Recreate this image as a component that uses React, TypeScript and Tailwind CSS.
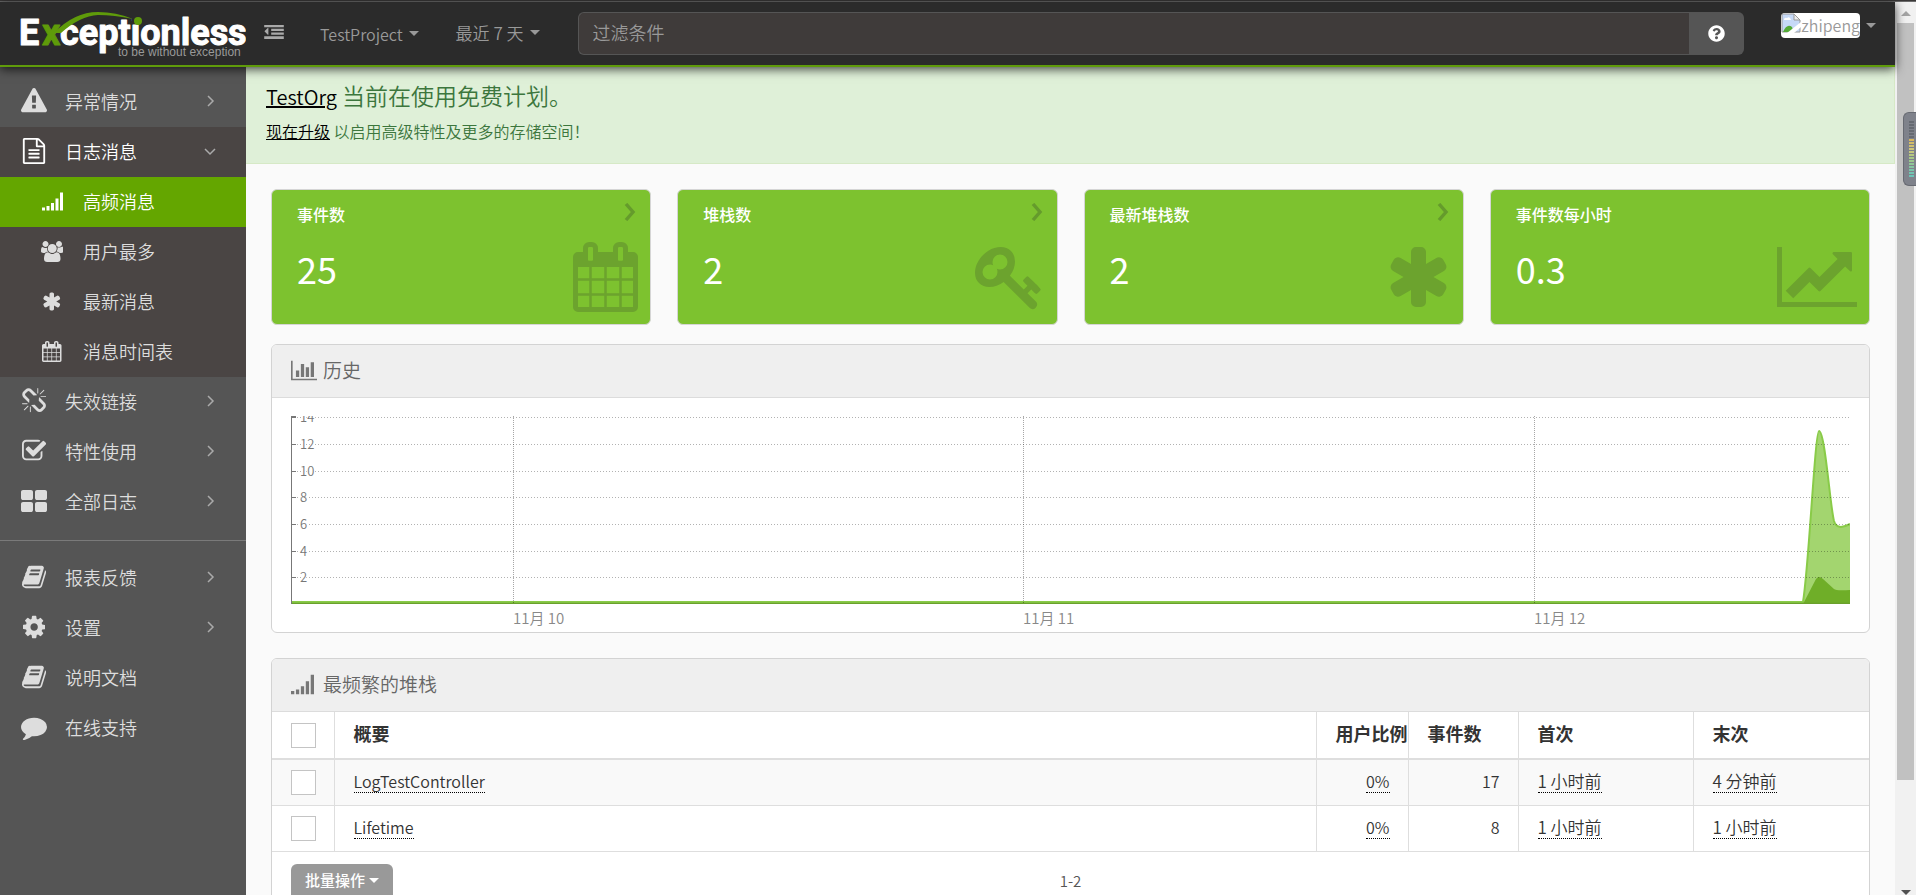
import { useState } from 'react'
import type { ReactNode } from 'react'
import { FaQuestionCircle } from 'react-icons/fa'
import clsx from 'clsx'

type Glyph = { box: string; d: string }

const GLYPHS = {
  warning: {
    box: '0 0 1792 1792',
    d: 'M1024 1375v-190q0-14-9.5-23.5t-22.5-9.5h-192q-13 0-22.5 9.5t-9.5 23.5v190q0 14 9.5 23.5t22.5 9.5h192q13 0 22.5-9.5t9.5-23.5zm-2-374l18-459q0-12-10-19-13-11-24-11h-220q-11 0-24 11-10 7-10 21l17 457q0 10 10 16.5t24 6.5h185q14 0 23.5-6.5t10.5-16.5zm-14-934l768 1408q35 63-2 126-17 29-46.5 46t-63.5 17h-1536q-34 0-63.5-17t-46.5-46q-37-63-2-126l768-1408q17-31 47-49t65-18 65 18 47 49z',
  },
  file: {
    box: '0 0 1792 1792',
    d: 'M1596 380q28 28 48 76t20 88v1152q0 40-28 68t-68 28h-1344q-40 0-68-28t-28-68v-1600q0-40 28-68t68-28h896q40 0 88 20t76 48zm-444-244v376h376q-10-29-22-41l-313-313q-12-12-41-22zm384 1528v-1024h-416q-40 0-68-28t-28-68v-416h-768v1536h1280zm-1024-864q0-14 9-23t23-9h704q14 0 23 9t9 23v64q0 14-9 23t-23 9h-704q-14 0-23-9t-9-23v-64zm736 224q14 0 23 9t9 23v64q0 14-9 23t-23 9h-704q-14 0-23-9t-9-23v-64q0-14 9-23t23-9h704zm0 256q14 0 23 9t9 23v64q0 14-9 23t-23 9h-704q-14 0-23-9t-9-23v-64q0-14 9-23t23-9h704z',
  },
  signal: {
    box: '0 0 1792 1792',
    d: 'M0 1408h256v256h-256zM384 1280h256v384h-256zM768 1024h256v640h-256zM1152 640h256v1024h-256zM1536 128h256v1536h-256z',
  },
  users: {
    box: '64 0 1920 1792',
    d: 'M657 896q-162 5-265 128h-134q-82 0-138-40.5t-56-118.5q0-353 124-353 6 0 43.5 21t97.5 42.5 119 21.5q67 0 133-23-5 37-5 66 0 159 93 293zm1071 637q0 120-73 189.5t-194 69.5h-874q-121 0-194-69.5t-73-189.5q0-53 3.5-103.5t14-109 26.5-108.5 43-97.5 62-81 85.5-53.5 111.5-20q10 0 43 21.5t73 48 107 48 135 21.5 135-21.5 107-48 73-48 43-21.5q61 0 111.5 20t85.5 53.5 62 81 43 97.5 26.5 108.5 14 109 3.5 103.5zm-1024-1277q0 106-75 181t-181 75-181-75-75-181 75-181 181-75 181 75 75 181zm704 384q0 159-112.5 271.5t-271.5 112.5-271.5-112.5-112.5-271.5 112.5-271.5 271.5-112.5 271.5 112.5 112.5 271.5zm576 225q0 78-56 118.5t-138 40.5h-134q-103-123-265-128 93-134 93-293 0-29-5-66 66 23 133 23 59 0 119-21.5t97.5-42.5 43.5-21q124 0 124 353zm-128-609q0 106-75 181t-181 75-181-75-75-181 75-181 181-75 181 75 75 181z',
  },
  asterisk: {
    box: '64 0 1664 1792',
    d: 'M1546 1050q46 26 59.5 77.5t-12.5 97.5l-64 110q-26 46-77.5 59.5t-97.5-12.5l-266-153v307q0 52-38 90t-90 38h-128q-52 0-90-38t-38-90v-307l-266 153q-46 26-97.5 12.5t-77.5-59.5l-64-110q-26-46-12.5-97.5t59.5-77.5l266-154-266-154q-46-26-59.5-77.5t12.5-97.5l64-110q26-46 77.5-59.5t97.5 12.5l266 153v-307q0-52 38-90t90-38h128q52 0 90 38t38 90v307l266-153q46-26 97.5-12.5t77.5 59.5l64 110q26 46 12.5 97.5t-59.5 77.5l-266 154z',
  },
  calendar: {
    box: '64 0 1664 1792',
    d: 'M192 1664h288v-288h-288v288zm352 0h320v-288h-320v288zm-352-352h288v-320h-288v320zm352 0h320v-320h-320v320zm-352-384h288v-288h-288v288zm736 736h320v-288h-320v288zm-384-736h320v-288h-320v288zm768 736h288v-288h-288v288zm-384-352h320v-320h-320v320zm-352-864v-288q0-13-9.5-22.5t-22.5-9.5h-64q-13 0-22.5 9.5t-9.5 22.5v288q0 13 9.5 22.5t22.5 9.5h64q13 0 22.5-9.5t9.5-22.5zm736 864h288v-320h-288v320zm-384-384h320v-288h-320v288zm384 0h288v-288h-288v288zm32-480v-288q0-13-9.5-22.5t-22.5-9.5h-64q-13 0-22.5 9.5t-9.5 22.5v288q0 13 9.5 22.5t22.5 9.5h64q13 0 22.5-9.5t9.5-22.5zm384-64v1280q0 52-38 90t-90 38h-1408q-52 0-90-38t-38-90v-1280q0-52 38-90t90-38h128v-96q0-66 47-113t113-47h64q66 0 113 47t47 113v96h384v-96q0-66 47-113t113-47h64q66 0 113 47t47 113v96h128q52 0 90 38t38 90z',
  },
  unlink: {
    box: '0 0 1664 1792',
    d: 'M439 1271l-256 256q-11 9-23 9t-23-9q-9-10-9-23t9-23l256-256q10-9 23-9t23 9q9 10 9 23t-9 23zm169 41v320q0 14-9 23t-23 9-23-9-9-23v-320q0-14 9-23t23-9 23 9 9 23zm-224-224q0 14-9 23t-23 9h-320q-14 0-23-9t-9-23 9-23 23-9h320q14 0 23 9t9 23zm1264 128q0 120-85 203l-147 146q-83 83-203 83-121 0-204-85l-334-335q-21-21-42-56l239-18 273 274q28 28 68 28.5t68-27.5l147-146q28-28 28-67 0-40-28-68l-274-275 18-239q35 21 56 42l336 336q84 86 84 204zm-617-724l-239 18-273-274q-28-28-68-28-39 0-68 27l-147 146q-28 28-28 67 0 40 28 68l274 274-18 240q-35-21-56-42l-336-336q-84-86-84-204 0-120 85-203l147-146q83-83 203-83 121 0 204 85l334 335q21 21 42 56zm633 84q0 14-9 23t-23 9h-320q-14 0-23-9t-9-23 9-23 23-9h320q14 0 23 9t9 23zm-544-544v320q0 14-9 23t-23 9-23-9-9-23v-320q0-14 9-23t23-9 23 9 9 23zm407 151l-256 256q-11 9-23 9t-23-9q-9-10-9-23t9-23l256-256q10-9 23-9t23 9q9 10 9 23t-9 23z',
  },
  check: {
    box: '64 0 1664 1792',
    d: 'M1472 930v318q0 119-84.5 203.5t-203.5 84.5h-832q-119 0-203.5-84.5t-84.5-203.5v-832q0-119 84.5-203.5t203.5-84.5h832q63 0 117 25 15 7 18 23 3 17-9 29l-49 49q-10 10-23 10-3 0-9-2-23-6-45-6h-832q-66 0-113 47t-47 113v832q0 66 47 113t113 47h832q66 0 113-47t47-113v-254q0-13 9-22l64-64q10-10 23-10 6 0 12 3 20 8 20 29zm231-489l-814 814q-24 24-57 24t-57-24l-430-430q-24-24-24-57t24-57l110-110q24-24 57-24t57 24l263 263 647-647q24-24 57-24t57 24l110 110q24 24 24 57t-24 57z',
  },
  blocks: {
    box: '64 0 1664 1664',
    d: 'M832 1024v384q0 52-38 90t-90 38h-512q-52 0-90-38t-38-90v-384q0-52 38-90t90-38h512q52 0 90 38t38 90zm0-768v384q0 52-38 90t-90 38h-512q-52 0-90-38t-38-90v-384q0-52 38-90t90-38h512q52 0 90 38t38 90zm896 768v384q0 52-38 90t-90 38h-512q-52 0-90-38t-38-90v-384q0-52 38-90t90-38h512q52 0 90 38t38 90zm0-768v384q0 52-38 90t-90 38h-512q-52 0-90-38t-38-90v-384q0-52 38-90t90-38h512q52 0 90 38t38 90z',
  },
  book: {
    box: '64 0 1664 1792',
    d: 'M1703 478q40 57 18 129l-275 906q-19 64-76.5 107.5t-122.5 43.5h-923q-77 0-148.5-53.5t-99.5-131.5q-24-67-2-127 0-4 3-27t4-37q1-8-3-21.5t-3-19.5q2-11 8-21t16.5-23.5 16.5-23.5q23-38 45-91.5t30-91.5q3-10 .5-30t-.5-28q3-11 17-28t17-23q21-36 42-92t25-90q1-9-2.5-32t.5-28q4-13 22-30.5t22-22.5q19-26 42.5-84.5t27.5-96.5q1-8-3-25.5t-2-26.5q2-8 9-18t18-23 17-21q8-12 16.5-30.5t15-35 16-36 19.5-32 26.5-23.5 36-11.5 47.5 5.5l-1 3q38-9 51-9h761q74 0 114 56t18 130l-274 906q-36 119-71.5 153.5t-128.5 34.5h-869q-27 0-38 15-11 16-1 43 24 70 144 70h923q29 0 56-15.5t35-41.5l300-987q7-22 5-57 38 15 59 43zm-1064 2q-4 13 2 22.5t20 9.5h608q13 0 25.5-9.5t16.5-22.5l21-64q4-13-2-22.5t-20-9.5h-608q-13 0-25.5 9.5t-16.5 22.5zm-83 256q-4 13 2 22.5t20 9.5h608q13 0 25.5-9.5t16.5-22.5l21-64q4-13-2-22.5t-20-9.5h-608q-13 0-25.5 9.5t-16.5 22.5z',
  },
  cog: {
    box: '128 0 1536 1792',
    d: 'M1152 896q0-106-75-181t-181-75-181 75-75 181 75 181 181 75 181-75 75-181zm512-109v222q0 12-8 23t-20 13l-185 28q-19 54-39 91 35 50 107 138 10 12 10 25t-9 23q-27 37-99 108t-94 71q-12 0-26-9l-138-108q-44 23-91 38-16 136-29 186-7 28-36 28h-222q-14 0-24.5-8.5t-11.5-21.5l-28-184q-49-16-90-37l-141 107q-10 9-25 9-14 0-25-11-126-114-165-168-7-10-7-23 0-12 8-23 15-21 51-66.5t54-70.5q-27-50-41-99l-183-27q-13-2-21-12.5t-8-23.5v-222q0-12 8-23t19-13l186-28q14-46 39-92-40-57-107-138-10-12-10-24 0-10 9-23 26-36 98.5-107.5t94.5-71.5q13 0 26 10l138 107q44-23 91-38 16-136 29-186 7-28 36-28h222q14 0 24.5 8.5t11.5 21.5l28 184q49 16 90 37l142-107q9-9 24-9 13 0 25 10 129 119 165 170 7 8 7 22 0 12-8 23-15 21-51 66.5t-54 70.5q26 50 41 98l183 28q13 2 21 12.5t8 23.5z',
  },
  comment: {
    box: '0 0 1792 1792',
    d: 'M1792 896q0 174-120 321.5t-326 233-450 85.5q-70 0-145-8-198 175-460 242-49 14-114 22-17 2-30.5-9t-17.5-29v-1q-3-4-.5-12t2-10 4.5-9.5l6-9 7-8.5 8-9q7-8 31-34.5t34.5-38 31-39.5 32.5-51 27-59 26-76q-157-89-247.5-220t-90.5-281q0-130 71-248.5t191-204.5 286-136.5 348-50.5q244 0 450 85.5t326 233 120 321.5z',
  },
  key: {
    box: '0 0 1792 1792',
    d: 'M832 512q0-80-56-136t-136-56-136 56-56 136q0 42 19 83-41-19-83-19-80 0-136 56t-56 136 56 136 136 56 136-56 56-136q0-42-19-83 41 19 83 19 80 0 136-56t56-136zm851 704q0 17-49 66t-66 49q-9 0-28.5-16t-36.5-33-38.5-40-24.5-26l-96 96 220 220q28 28 28 68 0 42-39 81t-81 39q-40 0-68-28l-671-671q-176 131-365 131-163 0-265.5-102.5t-102.5-265.5q0-160 95-313t248-248 313-95q163 0 265.5 102.5t102.5 265.5q0 189-131 365l355 355 96-96q-3-3-26-24.5t-40-38.5-33-36.5-16-28.5q0-17 49-66t66-49q13 0 23 10 6 6 46 44.5t82 79.5 86.5 86 73 78 28.5 41z',
  },
  lineChart: {
    box: '0 0 2048 1792',
    d: 'M2048 1536v128h-2048v-1536h128v1408h1920zm-128-1248v435q0 21-19.5 29.5t-35.5-7.5l-121-121-633 633q-10 10-23 10t-23-10l-233-233-416 416-192-192 585-585q10-10 23-10t23 10l233 233 464-464-121-121q-16-16-7.5-35.5t29.5-19.5h435q14 0 23 9t9 23z',
  },
  barChart: {
    box: '0 0 2048 1792',
    d: 'M640 896v512h-256v-512h256zm384-512v1024h-256v-1024h256zm1024 1152v128h-2048v-1536h128v1408h1920zm-640-896v768h-256v-768h256zm384-384v1152h-256v-1152h256z',
  },
  outdent: {
    box: '0 256 1792 1280',
    d: 'M384 544v576q0 32-32 32-14 0-23-9l-288-288q-18-23 0-46l288-288q9-9 23-9 32 0 32 32zM0 1280h1792v256h-1792zM640 938h1152v214h-1152zM640 597h1152v214h-1152zM0 256h1792v214h-1792z',
  },
} satisfies Record<string, Glyph>

type GlyphName = keyof typeof GLYPHS

function Icon({ name, className }: { name: GlyphName; className?: string }) {
  const g = GLYPHS[name]
  return (
    <svg viewBox={g.box} className={className} fill="currentColor" aria-hidden="true">
      <path d={g.d} />
    </svg>
  )
}

function Caret({ className }: { className?: string }) {
  return (
    <svg viewBox="0 0 10 5" className={clsx('w-2.5 h-[5px] shrink-0', className)} fill="currentColor" aria-hidden="true">
      <path d="M0 0h10l-5 5z" />
    </svg>
  )
}

function Logo() {
  return (
    <svg viewBox="0 0 246 63" className="w-[246px] h-[63px] shrink-0" role="img" aria-label="Exceptionless">
      <g fontFamily="Roboto, sans-serif" fontWeight="700" fontSize="36" strokeWidth="1" strokeLinejoin="round">
        <text x="19" y="43" fill="#fff" stroke="#fff">E</text>
        <text x="42" y="43" fill="#5f9b0a" stroke="#5f9b0a">x</text>
        <text x="60" y="43" fill="#fff" stroke="#fff">ceptionless</text>
      </g>
      <path d="M54 31Q74 10 98 10Q116 10 133 17Q114 13 98 13Q80 14 61 31z" fill="#5f9b0a" />
      <rect x="132" y="13" width="12" height="9" fill="#2b2b2b" />
      <circle cx="138" cy="19" r="4" fill="#5f9b0a" />
      <text x="118" y="54" fontFamily="'Liberation Sans', sans-serif" fontSize="12" fill="#999">to be without exception</text>
    </svg>
  )
}

type NavItem = { icon: GlyphName; label: string; expandable?: boolean }

const SUB_NAV: NavItem[] = [
  { icon: 'signal', label: '高频消息' },
  { icon: 'users', label: '用户最多' },
  { icon: 'asterisk', label: '最新消息' },
  { icon: 'calendar', label: '消息时间表' },
]

const LOG_NAV: NavItem[] = [
  { icon: 'unlink', label: '失效链接', expandable: true },
  { icon: 'check', label: '特性使用', expandable: true },
  { icon: 'blocks', label: '全部日志', expandable: true },
]

const TOOL_NAV: NavItem[] = [
  { icon: 'book', label: '报表反馈', expandable: true },
  { icon: 'cog', label: '设置', expandable: true },
  { icon: 'book', label: '说明文档' },
  { icon: 'comment', label: '在线支持' },
]

function NavRow({ item, open }: { item: NavItem; open?: boolean }) {
  return (
    <a
      href="#"
      className={clsx('flex items-center h-[50px] pl-5 pr-[30px] pb-0.5', open ? 'bg-[#4a4544] text-white' : 'text-[#ddd]')}
    >
      <span className="flex justify-center w-7 mr-[17px]">
        <Icon name={item.icon} className="h-[26px] max-w-[26px]" />
      </span>
      <span className="flex-1">{item.label}</span>
      {item.expandable && (
        <svg viewBox="0 0 12 12" className={clsx('w-3 h-3 text-[#aaa]', open && 'rotate-90')} fill="none" stroke="currentColor" strokeWidth="1.5" aria-hidden="true">
          <path d="M4 1l5 5-5 5" />
        </svg>
      )}
    </a>
  )
}

function Sidebar() {
  const [active, setActive] = useState(0)

  return (
    <nav className="w-[246px] shrink-0 bg-[#555] pt-2.5 text-lg">
      <NavRow item={{ icon: 'warning', label: '异常情况', expandable: true }} />
      <NavRow item={{ icon: 'file', label: '日志消息', expandable: true }} open />
      <div className="bg-[#4a4544]">
        {SUB_NAV.map((item, i) => (
          <a
            key={item.label}
            href="#"
            onClick={() => setActive(i)}
            className={clsx('flex items-center h-[50px] pl-10 pb-0.5', i === active ? 'bg-[#64a600] text-white' : 'text-[#ddd]')}
          >
            <span className="flex justify-center w-6 mr-[19px]">
              <Icon name={item.icon} className="h-[21px]" />
            </span>
            {item.label}
          </a>
        ))}
      </div>
      {LOG_NAV.map((item) => (
        <NavRow key={item.label} item={item} />
      ))}
      <hr className="mt-[13px] mb-3 border-[#7a7a7a]" />
      {TOOL_NAV.map((item) => (
        <NavRow key={item.label} item={item} />
      ))}
    </nav>
  )
}

function TopBar() {
  return (
    <header className="relative z-10 flex h-[65px] bg-[#2b2b2b] border-b-2 border-[#5f9b0a] text-[#999] shadow-[0_2px_10px_rgba(0,0,0,0.75)]">
      <Logo />
      <button aria-label="折叠菜单" className="self-start mt-[23px] ml-[18px] text-[#aaa]">
        <Icon name="outdent" className="w-5 h-3.5" />
      </button>
      <button className="flex items-center gap-1.5 ml-9 text-base">
        TestProject
        <Caret />
      </button>
      <button className="flex items-center gap-1.5 ml-[37px] pb-0.5 text-[17px]">
        最近 7 天
        <Caret />
      </button>
      <div className="flex flex-1 h-[43px] mt-2.5 ml-[38px]">
        <input
          aria-label="过滤条件"
          placeholder="过滤条件"
          className="flex-1 min-w-0 px-3.5 pb-1 text-lg bg-[#3f3b3a] border border-r-0 border-[#555] rounded-l-md placeholder:text-[#999]"
        />
        <button aria-label="帮助" className="flex items-center justify-center w-[55px] bg-[#555] rounded-r-md text-white">
          <FaQuestionCircle className="w-[17px] h-[17px]" />
        </button>
      </div>
      <button className="flex items-center self-start gap-1.5 mt-[11px] ml-[37px] mr-[19px]">
        <span className="flex items-start h-[25px] bg-white rounded overflow-hidden text-base leading-6">
          <svg viewBox="0 0 20 20" className="w-5 h-5" aria-hidden="true">
            <path d="M1 1h12l6 6v12H1z" fill="#c6d9f7" stroke="#999" />
            <path d="M3 7q0-3 3-2 3-2 4 2z" fill="#fff" />
            <path d="M2 19q4-9 9-5l2 5z" fill="#55ab38" />
            <path d="M13 1v6h6z" fill="#eee" stroke="#999" />
            <path d="M6 20l14-11v5l-7 6z" fill="#fff" />
          </svg>
          zhipeng
        </span>
        <Caret />
      </button>
    </header>
  )
}

const STATS: { title: string; value: string; icon: GlyphName; link: boolean }[] = [
  { title: '事件数', value: '25', icon: 'calendar', link: true },
  { title: '堆栈数', value: '2', icon: 'key', link: true },
  { title: '最新堆栈数', value: '2', icon: 'asterisk', link: true },
  { title: '事件数每小时', value: '0.3', icon: 'lineChart', link: false },
]

function Stats() {
  return (
    <div className="grid grid-cols-4 gap-[26px]">
      {STATS.map((s) => (
        <section key={s.title} className="flex justify-between h-[136px] pl-[25px] pr-3 pb-3 bg-[#7dc22f] border border-[#d5d5d5] rounded-md">
          <div className="text-white">
            <h2 className="mt-3 text-base leading-6 font-medium">{s.title}</h2>
            <p className="mt-5 text-[36px] leading-[44px] font-normal">{s.value}</p>
          </div>
          <div className="flex flex-col items-end justify-end gap-[21px] text-[#6ca32e]">
            {s.link && (
              <svg viewBox="0 0 12 18" className="w-3 h-[18px] mr-0.5" fill="none" stroke="#659b2c" strokeWidth="3.4" aria-hidden="true">
                <path d="M2 1l7 8-7 8" />
              </svg>
            )}
            <Icon name={s.icon} className="h-[70px]" />
          </div>
        </section>
      ))}
    </div>
  )
}

function Panel({ icon, title, children }: { icon: GlyphName; title: string; children: ReactNode }) {
  return (
    <section className="bg-white border border-[#d3d3d3] rounded-md overflow-hidden">
      <h2 className="flex items-center h-[53px] px-[19px] pb-0.5 bg-[#efefef] border-b border-[#dcdcdc] text-[19px] text-[#666]">
        <span className="w-8">
          <Icon name={icon} className="h-[23px] text-[#777]" />
        </span>
        {title}
      </h2>
      {children}
    </section>
  )
}

const BASE = 188
const y = (v: number) => BASE - (v * 40) / 3

const TICKS = [2, 4, 6, 8, 10, 12, 14]
const DAYS = [
  { x: 222, label: '11月 10' },
  { x: 732, label: '11月 11' },
  { x: 1243, label: '11月 12' },
]

function HistoryChart() {
  return (
    <svg viewBox="0 0 1559 216" className="block w-full" role="img" aria-label="历史">
      {/* plot area, clips the topmost tick label */}
      <svg width="1559" height="188">
        <path d="M1512 188C1518 150 1524 15 1528 15C1534 15 1539 90 1543 105Q1546 115 1559 108V188z" fill="#a3d56f" />
        <path d="M0 186H1512C1518 150 1524 15 1528 15C1534 15 1539 90 1543 105Q1546 115 1559 108" fill="none" stroke="#89cb48" strokeWidth="2" />
        <path d="M1512 188L1525 163Q1528 159 1532 163L1543 173Q1545 175 1559 174V188z" fill="#6fae28" />
        <path d="M0 187.5H1559" stroke="#6aa02c" strokeWidth="1.6" />
        {TICKS.map((t) => (
          <g key={t}>
            <path d={`M0 ${Math.round(y(t)) + 0.5}H1559`} stroke="#000" strokeOpacity="0.3" strokeDasharray="1 2" />
            <path d={`M0 ${Math.round(y(t)) + 0.5}h5`} stroke="#777" />
            <text x="9" y={y(t) + 5} fontSize="13" fill="#777" stroke="#fff" strokeWidth="2" paintOrder="stroke">{t}</text>
          </g>
        ))}
        {DAYS.map((d) => (
          <path key={d.x} d={`M${d.x + 0.5} 0V187`} stroke="#000" strokeOpacity="0.35" strokeDasharray="1 1" />
        ))}
        <path d="M0.5 0V188M0 0.5H5" stroke="#777" />
      </svg>
      {DAYS.map((d) => (
        <text key={d.x} x={d.x} y="208" fontSize="15" fill="#888">{d.label}</text>
      ))}
    </svg>
  )
}

const STACKS = [
  { name: 'LogTestController', users: '0%', events: 17, first: '1 小时前', last: '4 分钟前' },
  { name: 'Lifetime', users: '0%', events: 8, first: '1 小时前', last: '1 小时前' },
]

function Checkbox({ label }: { label: string }) {
  return <input type="checkbox" aria-label={label} className="block appearance-none w-[25px] h-[25px] bg-white border border-[#c4c4c4] checked:bg-[#64a600]" />
}

function StackTable() {
  return (
    <>
      <table className="w-full table-fixed text-[#333]">
        <colgroup>
          <col className="w-[62px]" />
          <col />
          <col className="w-[92px]" />
          <col className="w-[110px]" />
          <col className="w-[175px]" />
          <col className="w-[176px]" />
        </colgroup>
        <thead>
          <tr className="h-[47px] border-b-2 border-[#dedede] text-left text-lg leading-6 font-bold whitespace-nowrap">
            <th className="pl-[19px] border-r border-[#dedede]"><Checkbox label="全选" /></th>
            <th className="pl-[19px] pb-1 border-r border-[#dedede]">概要</th>
            <th className="pl-[19px] pb-1 border-r border-[#dedede]">用户比例</th>
            <th className="pl-[19px] pb-1 border-r border-[#dedede]">事件数</th>
            <th className="pl-[19px] pb-1 border-r border-[#dedede]">首次</th>
            <th className="pl-[19px] pb-1">末次</th>
          </tr>
        </thead>
        <tbody>
          {STACKS.map((s) => (
            <tr key={s.name} className="h-[46px] border-b border-[#dedede] odd:bg-[#f9f9f9] text-base leading-[22px]">
              <td className="pl-[19px] border-r border-[#dedede]"><Checkbox label={s.name} /></td>
              <td className="pl-[19px] pb-0.5 border-r border-[#dedede]">
                <a href="#" className="inline-block border-b border-dotted border-black">{s.name}</a>
              </td>
              <td className="pr-[18px] pb-0.5 border-r border-[#dedede] text-right">
                <span className="inline-block border-b border-dotted border-black">{s.users}</span>
              </td>
              <td className="pr-[18px] pb-0.5 border-r border-[#dedede] text-right">{s.events}</td>
              <td className="pl-[19px] pb-0.5 border-r border-[#dedede]">
                <span className="inline-block border-b border-dotted border-black text-[17px]">{s.first}</span>
              </td>
              <td className="pl-[19px] pb-0.5">
                <span className="inline-block border-b border-dotted border-black text-[17px]">{s.last}</span>
              </td>
            </tr>
          ))}
        </tbody>
      </table>
      <div className="grid grid-cols-3 items-center px-[19px] py-3 text-[15px] text-[#555]">
        <button className="flex items-center justify-self-start gap-1 h-9 px-3.5 pb-0.5 bg-[#999] rounded-md text-white font-medium">
          批量操作
          <Caret />
        </button>
        <span className="text-center">1-2</span>
      </div>
    </>
  )
}

const METER = [
  'bg-[#666a72]', 'bg-[#666a72]', 'bg-[#666a72]', 'bg-[#666a72]', 'bg-[#666a72]', 'bg-[#666a72]',
  'bg-[#d9b65c]', 'bg-[#d3bd68]', 'bg-[#d0c070]', 'bg-[#cfc67a]', 'bg-[#c5c87c]', 'bg-[#b6c97f]',
  'bg-[#a8c886]', 'bg-[#9bc78d]', 'bg-[#8fc696]', 'bg-[#84c5a0]', 'bg-[#7ac4a9]', 'bg-[#72c4b1]', 'bg-[#6cc4b6]',
]

function ScrollGutter() {
  return (
    <div className="relative flex flex-col items-center w-[21px] shrink-0 bg-[#f1f1f1]">
      <Caret className="mt-[9px] rotate-180 text-[#a3a3a3]" />
      <div className="w-[17px] h-[757px] mt-[7px] bg-[#c1c1c1]" />
      <Caret className="mt-auto text-[#505050]" />
      {/* floating desktop meter */}
      <div className="absolute right-0 top-[110px] flex flex-col gap-px w-[13px] h-[74px] pl-[5px] pt-2 pr-0.5 bg-[#7f828b] border border-r-0 border-[#676a72] rounded-l-md">
        {METER.map((c, i) => (
          <span key={i} className={clsx('h-0.5', c)} />
        ))}
      </div>
    </div>
  )
}

export default function App() {
  return (
    <div className="flex flex-col h-screen overflow-hidden bg-[#fafafa] font-[350] font-['Noto_Sans_CJK_SC',sans-serif]">
      <div className="h-0.5 shrink-0 bg-[#3a3838] border-b border-[#6b6b6b]" />
      <div className="flex flex-1 min-h-0">
        <div className="flex flex-col flex-1 min-w-0">
          <TopBar />
          <div className="flex flex-1 min-h-0">
            <Sidebar />
            <main className="flex-1 min-w-0 overflow-hidden">
              <div className="h-[97px] px-5 pt-3 bg-[#dff0d8] border-b border-r border-[#d6e9c6] text-[#3c763d]">
                <p className="text-[23px] leading-8">
                  <a href="#" className="text-xl text-black underline">TestOrg</a> 当前在使用免费计划。
                </p>
                <p className="mt-2 text-base leading-6">
                  <a href="#" className="text-black underline">现在升级</a> 以启用高级特性及更多的存储空间！
                </p>
              </div>
              <div className="flex flex-col p-[25px]">
                <Stats />
                <div className="mt-[19px]">
                  <Panel icon="barChart" title="历史">
                    <div className="px-[19px] pt-[18px]">
                      <HistoryChart />
                    </div>
                  </Panel>
                </div>
                <div className="mt-[25px]">
                  <Panel icon="signal" title="最频繁的堆栈">
                    <StackTable />
                  </Panel>
                </div>
              </div>
            </main>
          </div>
        </div>
        <ScrollGutter />
      </div>
    </div>
  )
}
